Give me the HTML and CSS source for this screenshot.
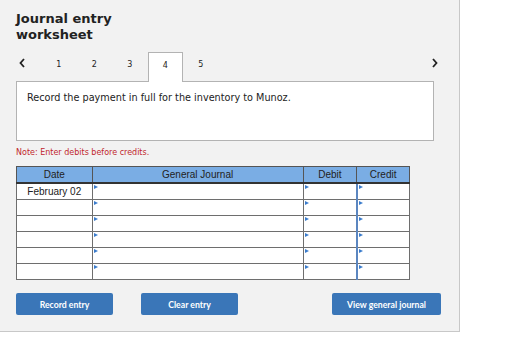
FILE: index.html
```html
<!DOCTYPE html>
<html>
<head>
<meta charset="utf-8">
<link rel="stylesheet" href="styles.css">
</head>
<body>
<div class="panel">
  <h1 class="title">Journal entry<br>worksheet</h1>
  <div class="tabs">
    <span class="arrow prev"><svg width="6" height="10" viewBox="0 0 6 10"><path d="M5 1 L1.5 5 L5 9" fill="none" stroke="#222" stroke-width="1.8"/></svg></span>
    <span class="tab">1</span>
    <span class="tab">2</span>
    <span class="tab">3</span>
    <span class="tab active">4</span>
    <span class="tab">5</span>
    <span class="spacer"></span>
    <span class="arrow next"><svg width="6" height="10" viewBox="0 0 6 10"><path d="M1 1 L4.5 5 L1 9" fill="none" stroke="#222" stroke-width="1.8"/></svg></span>
  </div>
  <div class="prompt">Record the payment in full for the inventory to Munoz.</div>
  <div class="note">Note: Enter debits before credits.</div>
  <table class="journal">
    <thead>
      <tr><th class="c-date">Date</th><th class="c-gj">General Journal</th><th class="c-dr">Debit</th><th class="c-cr">Credit</th></tr>
    </thead>
    <tbody>
      <tr><td class="c-date">February 02</td><td class="in"></td><td class="in dr"></td><td class="in"></td></tr>
      <tr><td class="c-date"></td><td class="in"></td><td class="in dr"></td><td class="in"></td></tr>
      <tr><td class="c-date"></td><td class="in"></td><td class="in dr"></td><td class="in"></td></tr>
      <tr><td class="c-date"></td><td class="in"></td><td class="in dr"></td><td class="in"></td></tr>
      <tr><td class="c-date"></td><td class="in"></td><td class="in dr"></td><td class="in"></td></tr>
      <tr><td class="c-date"></td><td class="in"></td><td class="in dr"></td><td class="in"></td></tr>
    </tbody>
  </table>
  <div class="buttons">
    <button class="btn b-record">Record entry</button>
    <button class="btn b-clear">Clear entry</button>
    <span class="spacer"></span>
    <button class="btn b-view">View general journal</button>
  </div>
</div>
</body>
</html>
```

FILE: styles.css
```css
html, body { margin: 0; padding: 0; background: #ffffff; }
body { font-family: "DejaVu Sans", Verdana, sans-serif; }

.panel {
  width: 460px;
  height: 332px;
  box-sizing: border-box;
  background: #f2f2f2;
  border-right: 1px solid #c8c8c8;
  border-bottom: 1px solid #c8c8c8;
  padding: 0 0 0 16px;
}

.title {
  margin: 0;
  padding-top: 11px;
  font-size: 13px;
  line-height: 16px;
  font-weight: bold;
  color: #222;
}

.tabs {
  display: flex;
  align-items: stretch;
  height: 29px;
  margin-top: 9px;
  width: 422px;
}
.arrow {
  display: flex;
  align-items: flex-start;
  padding-top: 6px;
  box-sizing: border-box;
}
.arrow.prev { width: 25px; padding-left: 3px; }
.arrow.next { width: 6px; }
.tab {
  width: 35.5px;
  text-align: center;
  font-size: 8px;
  line-height: 26px;
  color: #222;
  box-sizing: border-box;
}
.tab.active {
  background: #fff;
  border: 1px solid #b3b3b3;
  border-bottom: none;
  margin-bottom: -1px;
  position: relative;
  z-index: 1;
}
.spacer { flex: 1; }

.prompt {
  width: 418px;
  height: 60px;
  box-sizing: border-box;
  background: #fff;
  border: 1px solid #b3b3b3;
  padding: 10px 10px;
  font-size: 9.7px;
  line-height: 12px;
  color: #222;
}

.note {
  margin-top: 7px;
  font-size: 8px;
  line-height: 9px;
  color: #c1272d;
}

.journal {
  margin-top: 9px;
  border-collapse: collapse;
  width: 394px;
  font-family: "Liberation Sans", Arial, sans-serif;
  font-size: 10px;
  color: #222;
}
.journal th {
  background: #7aade4;
  height: 15px;
  line-height: 15px;
  padding: 0;
  font-weight: normal;
  border: 1px solid #555;
  border-bottom: 2px solid #333;
}
.journal td {
  height: 15px;
  line-height: 15px;
  padding: 0;
  border: 1px solid #6e6e6e;
  background: #fff;
}
.c-date { width: 75px; text-align: center; }
.c-gj { width: 212px; }
.c-dr { width: 53px; }
.c-cr { width: 52px; }
.journal td.c-date { text-align: center; }
.journal td.in { position: relative; }
.journal td.in::before {
  content: "";
  position: absolute;
  left: 1px;
  top: 1px;
  border-left: 4px solid #3b7ccc;
  border-top: 2.5px solid transparent;
  border-bottom: 2.5px solid transparent;
}
.journal td.dr { border-right: 2px solid #5b86c0; }

.buttons {
  display: flex;
  width: 425px;
  margin-top: 13px;
}
.btn {
  height: 22px;
  border: none;
  border-radius: 2px;
  background: #3a76b8;
  color: #fff;
  font-family: Lato, "Open Sans", sans-serif;
  font-weight: bold;
  font-size: 8.7px;
  padding: 0;
}
.b-record { width: 97px; }
.b-clear { width: 97px; margin-left: 28px; }
.b-view { width: 109px; }
```
